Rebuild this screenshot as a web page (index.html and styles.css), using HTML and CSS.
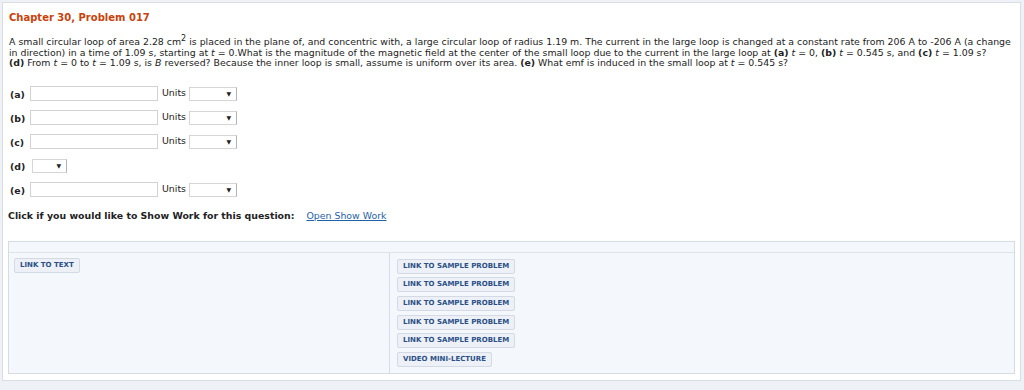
FILE: index.html
```html
<!DOCTYPE html>
<html lang="en">
<head>
    <meta charset="UTF-8">
    <title>Chapter 30, Problem 017</title>
    <link rel="stylesheet" href="styles.css">
</head>
<body>

    <div class="panel">
        <h1 class="title">Chapter 30, Problem 017</h1>

        <p class="question">
            A small circular loop of area 2.28 cm<sup>2</sup> is placed in the plane of, and concentric with, a large circular loop of radius 1.19 m. The current in the large loop is changed at a constant rate from 206 A to -206 A (a change in direction) in a time of 1.09 s, starting at <i>t</i> = 0.What is the magnitude of the magnetic field at the center of the small loop due to the current in the large loop at <b>(a)</b> <i>t</i> = 0, <b>(b)</b> <i>t</i> = 0.545 s, and <b>(c)</b> <i>t</i> = 1.09 s?<br>
            <b>(d)</b> From <i>t</i> = 0 to <i>t</i> = 1.09 s, is <i>B</i> reversed? Because the inner loop is small, assume is uniform over its area. <b>(e)</b> What emf is induced in the small loop at <i>t</i> = 0.545 s?
        </p>

        <div class="answers">
            <div class="row">
                <span class="label">(a)</span>
                <input type="text" class="answer">
                <span class="units">Units</span>
                <span class="select"><span class="arrow">&#9660;</span></span>
            </div>
            <div class="row">
                <span class="label">(b)</span>
                <input type="text" class="answer">
                <span class="units">Units</span>
                <span class="select"><span class="arrow">&#9660;</span></span>
            </div>
            <div class="row">
                <span class="label">(c)</span>
                <input type="text" class="answer">
                <span class="units">Units</span>
                <span class="select"><span class="arrow">&#9660;</span></span>
            </div>
            <div class="row">
                <span class="label">(d)</span>
                <span class="select small"><span class="arrow">&#9660;</span></span>
            </div>
            <div class="row">
                <span class="label">(e)</span>
                <input type="text" class="answer">
                <span class="units">Units</span>
                <span class="select"><span class="arrow">&#9660;</span></span>
            </div>
        </div>

        <div class="show-work">
            <b>Click if you would like to Show Work for this question:</b>
            <a href="#">Open Show Work</a>
        </div>

        <div class="resources">
            <div class="resources-head"></div>
            <div class="resources-body">
                <div class="cell left">
                    <a class="res-btn" href="#">Link to Text</a>
                </div>
                <div class="cell right">
                    <a class="res-btn" href="#">Link to Sample Problem</a>
                    <a class="res-btn" href="#">Link to Sample Problem</a>
                    <a class="res-btn" href="#">Link to Sample Problem</a>
                    <a class="res-btn" href="#">Link to Sample Problem</a>
                    <a class="res-btn" href="#">Link to Sample Problem</a>
                    <a class="res-btn" href="#">Video Mini-Lecture</a>
                </div>
            </div>
        </div>
    </div>

</body>
</html>
```

FILE: styles.css
```css
body {
    font-family: "DejaVu Sans", Verdana, sans-serif;
    font-size: 9.4px;
    color: #222;
    background-color: #eef2f7;
    margin: 0;
    padding: 0;
}
.panel {
    margin: 2px 3px 0 2px;
    padding: 0 5px;
    height: 379px;
    box-sizing: border-box;
    background-color: white;
    border: 1px solid #d9dee5;
}
.title {
    font-size: 10px;
    color: #c8430c;
    margin: 0;
    padding: 9px 1px 0;
}
.question {
    margin: 14px 0 0;
    padding-left: 1px;
    line-height: 10.5px;
}
.question sup {
    font-size: 8px;
    line-height: 0;
}
.answers {
    margin-top: 17px;
}
.row {
    display: flex;
    align-items: flex-start;
    height: 24px;
}
.label {
    font-weight: bold;
    width: 22px;
    padding: 3px 0 0 2px;
    box-sizing: border-box;
}
.answer {
    width: 128px;
    height: 15px;
    box-sizing: border-box;
    border: 1px solid #d2d2d2;
    margin: 0;
    padding: 0 2px;
}
.units {
    padding: 1px 0 0 4px;
    width: 27px;
}
.select {
    display: flex;
    justify-content: flex-end;
    align-items: center;
    width: 48px;
    height: 14px;
    margin-top: 1px;
    box-sizing: border-box;
    border: 1px solid #d6d6d6;
    border-right-color: #b4b4b4;
    padding-right: 5px;
}
.select.small {
    width: 35px;
    margin: 1px 0 0 2px;
}
.arrow {
    font-size: 6px;
    color: #222;
}
.show-work {
    margin-top: 4px;
}
.show-work a {
    color: #1f62a8;
    margin-left: 9px;
}
.resources {
    margin-top: 20px;
    border: 1px solid #d6dce3;
    background-color: #f4f7fb;
    height: 133px;
    box-sizing: border-box;
}
.resources-head {
    height: 10px;
    border-bottom: 1px solid #dde3ea;
}
.resources-body {
    display: flex;
    height: 121px;
}
.cell {
    display: flex;
    flex-direction: column;
    align-items: flex-start;
    gap: 3.7px;
}
.left {
    width: 381px;
    padding: 5px 0 0 5px;
    border-right: 1px solid #d6dce3;
    box-sizing: border-box;
}
.right {
    padding: 6px 0 0 7px;
}
.res-btn {
    display: block;
    font-size: 7px;
    font-weight: bold;
    text-transform: uppercase;
    text-decoration: none;
    color: #2b4f86;
    background-color: #edf1f7;
    border: 1px solid #d3dae3;
    border-radius: 2px;
    padding: 3px 5px;
    line-height: 7px;
}
```
